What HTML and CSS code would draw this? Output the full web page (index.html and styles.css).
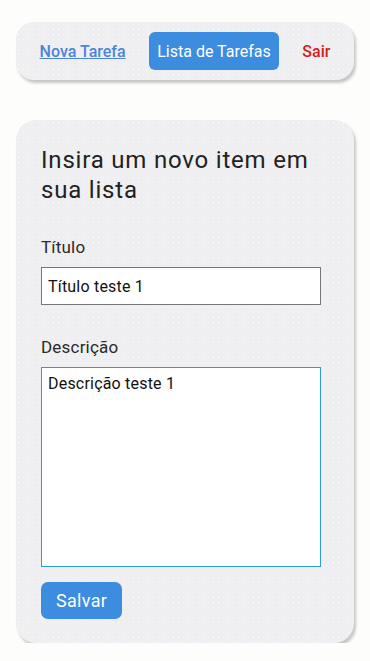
FILE: index.html
```html
<!DOCTYPE html>
<html lang="pt-BR">
<head>
<meta charset="utf-8">
<title>Nova Tarefa</title>
<link rel="stylesheet" href="styles.css">
</head>
<body>
<nav class="nav">
  <a class="nav-link" href="#">Nova Tarefa</a>
  <a class="nav-btn" href="#">Lista de Tarefas</a>
  <a class="nav-exit" href="#">Sair</a>
</nav>
<main class="card">
  <h1 class="title">Insira um novo item em sua lista</h1>
  <label class="label" for="t">Título</label>
  <input class="input" id="t" type="text" value="Título teste 1">
  <label class="label label-gap" for="d">Descrição</label>
  <textarea class="textarea" id="d">Descrição teste 1</textarea>
  <button class="save" type="button">Salvar</button>
</main>
</body>
</html>
```
FILE: styles.css
```css
* { box-sizing: border-box; }
html, body { margin: 0; padding: 0; }
body {
  background: #fdfdfb;
  font-family: Roboto, "Noto Sans", sans-serif;
  color: #222;
  padding: 22px 16px 0 16px;
  width: 370px;
}
.nav, .card {
  background-color: #efeff1;
  background-image: radial-gradient(rgba(255,255,255,0.7) 0.6px, transparent 1px);
  background-size: 5px 5px;
  box-shadow: 2px 3px 3px rgba(0,0,0,0.22);
}
.nav {
  height: 58px;
  border-radius: 18px;
  display: flex;
  align-items: center;
  justify-content: space-evenly;
  font-size: 16px;
}
.nav-link {
  color: #4a85d9;
  text-decoration: underline;
  font-weight: 500;
}
.nav-btn {
  background: #3c8ce0;
  color: #fff;
  text-decoration: none;
  border-radius: 6px;
  height: 38px;
  padding: 0 8px;
  display: flex;
  align-items: center;
}
.nav-exit {
  color: #d3201d;
  text-decoration: none;
  font-weight: 500;
}
.card {
  margin-top: 40px;
  border-radius: 20px;
  padding: 25px 25px 24px 25px;
  display: flex;
  flex-direction: column;
  align-items: flex-start;
}
.title {
  margin: 0 0 32px 0;
  font-size: 24px;
  line-height: 30px;
  letter-spacing: 0.8px;
  font-weight: 400;
  color: #222;
  width: 290px;
}
.label {
  font-size: 17px;
  line-height: 20px;
  letter-spacing: 0.2px;
  color: #2a2a2a;
  margin-bottom: 10px;
}
.label-gap { margin-top: 32px; }
.input, .textarea {
  width: 280px;
  font-family: inherit;
  font-size: 16px;
  letter-spacing: 0.2px;
  color: #111;
  background: #fff;
  margin: 0;
}
.input {
  height: 38px;
  border: 1px solid #767676;
  padding: 0 6px;
}
.textarea {
  height: 200px;
  border: 1px solid #2b9bd9;
  padding: 6px 6px;
  resize: none;
  line-height: 20px;
  outline: none;
}
.save {
  margin-top: 15px;
  background: #3c8ce0;
  color: #fff;
  border: none;
  border-radius: 7px;
  height: 37px;
  padding: 0 15px;
  font-family: inherit;
  font-size: 18px;
  letter-spacing: 0.3px;
}
```
